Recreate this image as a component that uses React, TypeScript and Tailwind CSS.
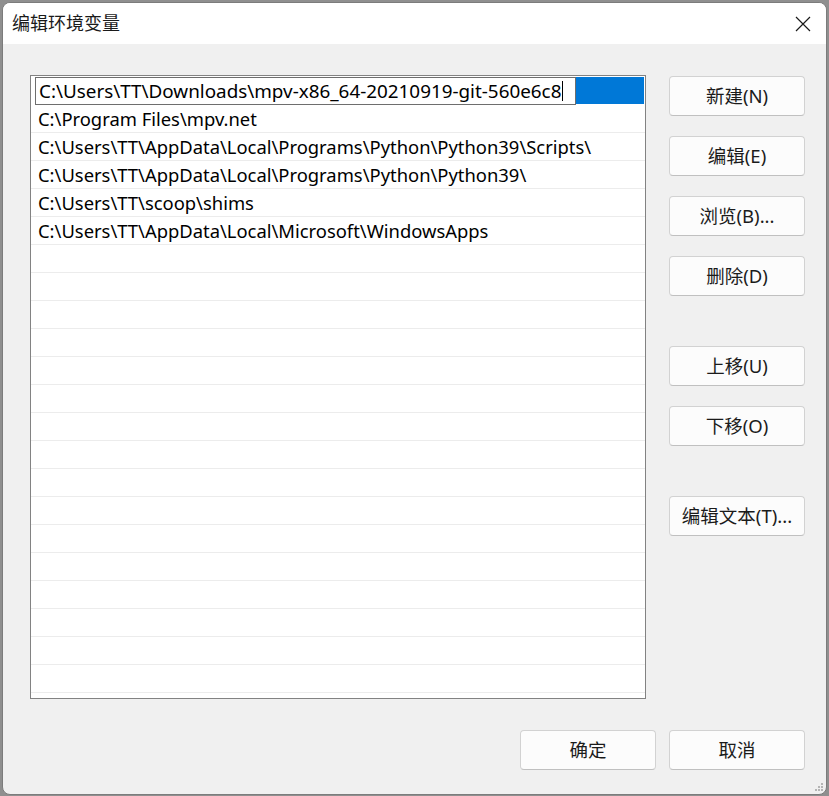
import React from "react";

const rows = [
  "C:\\Users\\TT\\Downloads\\mpv-x86_64-20210919-git-560e6c8",
  "C:\\Program Files\\mpv.net",
  "C:\\Users\\TT\\AppData\\Local\\Programs\\Python\\Python39\\Scripts\\",
  "C:\\Users\\TT\\AppData\\Local\\Programs\\Python\\Python39\\",
  "C:\\Users\\TT\\scoop\\shims",
  "C:\\Users\\TT\\AppData\\Local\\Microsoft\\WindowsApps",
];

const FONT = "font-['Noto_Sans','Noto_Sans_CJK_SC',sans-serif]";

function Btn({ label, className = "" }: { label: string; className?: string }) {
  return (
    <div
      className={`flex h-[40px] w-[136px] items-center justify-center rounded-[4px] border border-[#d2d2d2] border-b-[#c0c0c0] bg-[#fcfcfc] text-[18.5px] text-[#1b1b1b] ${className}`}
    >
      {label}
    </div>
  );
}

export default function App() {
  const empty = Array.from({ length: 17 });
  return (
    <div className={`h-[796px] w-[829px] overflow-hidden bg-[#8f8f8f] pl-[2px] pt-[2px] ${FONT}`}>
      <div className="relative flex h-[793px] w-[825px] flex-col overflow-hidden rounded-[8px] border border-[#7c7c7c] bg-[#f0f0f0]">
        {/* title bar */}
        <div className="flex h-[41px] shrink-0 items-center justify-between bg-white pl-[9px] pr-[15px]">
          <span className="text-[18px] text-[#1a1a1a]">编辑环境变量</span>
          <svg width="16" height="16" viewBox="0 0 16 16" className="mt-[1px]">
            <path d="M1 1 L15 15 M15 1 L1 15" stroke="#1a1a1a" strokeWidth="1.2" fill="none" />
          </svg>
        </div>
        {/* client */}
        <div className="flex flex-1 flex-col pl-[27px] pt-[31px]">
          <div className="flex gap-[23px]">
            {/* list box */}
            <div className="h-[624px] w-[616px] overflow-hidden border border-[#828282] bg-white pt-[1px]">
              {/* selected row with editor */}
              <div className="flex h-[28px] items-stretch">
                <div className="ml-[4px] flex w-[541px] items-center border border-[#6e6e6e] bg-white pl-[3px] text-[18.85px] text-black">
                  <span className="whitespace-nowrap">{rows[0]}</span>
                  <span className="ml-[1px] inline-block h-[20px] w-[1px] shrink-0 bg-black" />
                </div>
                <div className="mb-[1px] mr-[1px] flex-1 bg-[#0078d7]" />
              </div>
              {rows.slice(1).map((r) => (
                <div
                  key={r}
                  className="flex h-[28px] items-center whitespace-nowrap border-b border-[#ececec] pl-[7px] text-[18.4px] text-black"
                >
                  {r}
                </div>
              ))}
              {empty.map((_, i) => (
                <div key={i} className="h-[28px] border-b border-[#ececec]" />
              ))}
            </div>
            {/* side buttons */}
            <div className="flex flex-col pt-[1px]">
              <Btn label="新建(N)" />
              <Btn label="编辑(E)" className="mt-[20px]" />
              <Btn label="浏览(B)..." className="mt-[20px]" />
              <Btn label="删除(D)" className="mt-[20px]" />
              <Btn label="上移(U)" className="mt-[50px]" />
              <Btn label="下移(O)" className="mt-[20px]" />
              <Btn label="编辑文本(T)..." className="mt-[50px]" />
            </div>
          </div>
          <div className="mt-[31px] flex justify-end gap-[13px] pr-[21px]">
            <Btn label="确定" />
            <Btn label="取消" />
          </div>
        </div>
        {/* resize grip */}
        <svg width="10" height="10" viewBox="0 0 10 10" className="absolute bottom-[2px] right-[2px]">
          <g fill="#b5b5b5">
            <rect x="7" y="1" width="2" height="2" />
            <rect x="4" y="4" width="2" height="2" />
            <rect x="7" y="4" width="2" height="2" />
            <rect x="1" y="7" width="2" height="2" />
            <rect x="4" y="7" width="2" height="2" />
            <rect x="7" y="7" width="2" height="2" />
          </g>
        </svg>
      </div>
    </div>
  );
}
